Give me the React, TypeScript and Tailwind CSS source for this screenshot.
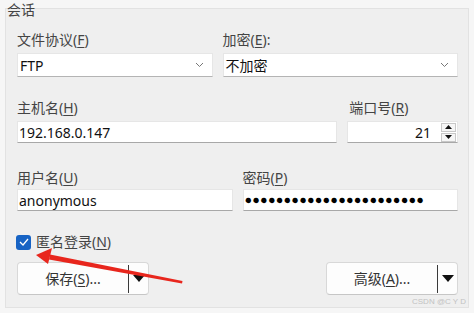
import React from "react";

const Chevron = () => (
  <svg width="9" height="6" viewBox="0 0 9 6" className="shrink-0">
    <polyline points="1,1 4.5,4.5 8,1" fill="none" stroke="#777" strokeWidth="1" />
  </svg>
);

const U = ({ c }: { c: string }) => (
  <span className="underline underline-offset-[2px] decoration-[1px]">{c}</span>
);

const Label = ({ children, className = "" }: { children: React.ReactNode; className?: string }) => (
  <div className={"h-[20px] leading-[20px] text-[14px] text-[#444] whitespace-nowrap " + className}>{children}</div>
);

const Select = ({ value }: { value: string }) => (
  <div className="h-[24px] bg-white border border-[#e6e6e6] border-b-[#b4b4b4] flex items-center justify-between pl-[2px] pr-[8px] text-[14px] text-[#111]">
    <span>{value}</span>
    <Chevron />
  </div>
);

const Input = ({ children, className = "" }: { children: React.ReactNode; className?: string }) => (
  <div className={"h-[22px] bg-white border border-[#e6e6e6] border-b-[#a8a8a8] flex items-center text-[14px] text-[#111] " + className}>
    {children}
  </div>
);

const DownTri = () => (
  <svg width="12" height="7" viewBox="0 0 12 7">
    <polygon points="0,0 12,0 6,7" fill="#111" />
  </svg>
);

const SplitButton = ({ children, w }: { children: React.ReactNode; w: string }) => (
  <div className={"h-[33px] bg-[#fdfdfd] border border-[#d8d8d8] border-b-[#c6c6c6] rounded-[4px] flex items-center " + w}>
    <div className="flex-1 text-center text-[14px] text-[#333] leading-[20px]">{children}</div>
    <div className="w-[1px] h-[28px] bg-[#3a3a3a]" />
    <div className="w-[19px] flex items-center justify-center">
      <DownTri />
    </div>
  </div>
);

export default function App() {
  return (
    <div className="relative w-[474px] h-[313px] bg-[#f6f6f6] overflow-hidden font-['Noto_Sans','Noto_Sans_CJK_SC',sans-serif]">
      <div className="pt-[8px] pl-[5px]">
        <div className="w-[464px] h-[300px] bg-[#efefef] border border-[#e2e2e2] pl-[11px] pr-[10px]">
          {/* Row 1 */}
          <div className="flex gap-[10px] mt-[21px]">
            <div className="w-[196px]">
              <Label>文件协议(<U c="F" />)</Label>
              <div className="mt-[3px]">
                <Select value="FTP" />
              </div>
            </div>
            <div className="w-[236px]">
              <Label>加密(<U c="E" />):</Label>
              <div className="mt-[3px]">
                <Select value="不加密" />
              </div>
            </div>
          </div>
          {/* Row 2 */}
          <div className="flex gap-[10px] mt-[21px]">
            <div className="w-[321px]">
              <Label>主机名(<U c="H" />)</Label>
              <div className="mt-[3px]">
                <Input className="pl-[1px]">192.168.0.147</Input>
              </div>
            </div>
            <div className="w-[111px]">
              <Label className="pl-[2px]">端口号(<U c="R" />)</Label>
              <div className="mt-[3px]">
                <Input className="justify-end pr-[1px]">
                  <span className="mr-[10px]">21</span>
                  <div className="flex flex-col gap-[1px] w-[15px]">
                    <div className="h-[9px] border border-[#c8c8c8] bg-[#f6f6f6] flex items-center justify-center">
                      <svg width="7" height="4" viewBox="0 0 7 4"><polygon points="0,4 7,4 3.5,0" fill="#111" /></svg>
                    </div>
                    <div className="h-[9px] border border-[#c8c8c8] bg-[#f6f6f6] flex items-center justify-center">
                      <svg width="7" height="4" viewBox="0 0 7 4"><polygon points="0,0 7,0 3.5,4" fill="#111" /></svg>
                    </div>
                  </div>
                </Input>
              </div>
            </div>
          </div>
          {/* Row 3 */}
          <div className="flex gap-[10px] mt-[25px]">
            <div className="w-[216px]">
              <Label>用户名(<U c="U" />)</Label>
              <div className="mt-[1px]">
                <Input className="pl-[1px]">anonymous</Input>
              </div>
            </div>
            <div className="w-[216px]">
              <Label>密码(<U c="P" />)</Label>
              <div className="mt-[1px]">
                <Input className="pl-[1px]">
                  <span className="font-['Liberation_Sans',sans-serif] text-[12.6px] tracking-[0.2px] text-black leading-none">
                    ●●●●●●●●●●●●●●●●●●●●●●●
                  </span>
                </Input>
              </div>
            </div>
          </div>
          {/* Row 4 */}
          <div className="flex items-center gap-[5px] mt-[21px] h-[20px] ml-[-1px]">
            <div className="w-[15px] h-[15px] rounded-[3px] bg-[#1763c4] flex items-center justify-center">
              <svg width="10" height="8" viewBox="0 0 10 8">
                <polyline points="1,4 4,7 9,1" fill="none" stroke="white" strokeWidth="1.3" />
              </svg>
            </div>
            <span className="text-[14px] text-[#444] leading-[20px]">匿名登录(<U c="N" />)</span>
          </div>
          {/* Row 5 */}
          <div className="flex justify-between mt-[10px]">
            <SplitButton w="w-[132px]">保存(<U c="S" />)...</SplitButton>
            <SplitButton w="w-[132px]">高级(<U c="A" />)...</SplitButton>
          </div>
        </div>
      </div>
      {/* Legend */}
      <div className="absolute left-[7px] top-0 text-[14px] leading-[19px] text-[#444]">会话</div>
      {/* Watermark */}
      <div className="absolute left-[412px] top-[297px] text-[8px] leading-[10px] text-[#c2c2c2] font-['Liberation_Sans',sans-serif]">
        CSDN @C Y D
      </div>
      {/* Red annotation arrow */}
      <svg className="absolute left-0 top-0 pointer-events-none" width="474" height="313" viewBox="0 0 474 313">
        <polygon points="36,255 52,248 48,264" fill="#e8261d" />
        <polygon points="50,254.5 182.5,281 182,283.5 49,259.5" fill="#e8261d" />
      </svg>
    </div>
  );
}
